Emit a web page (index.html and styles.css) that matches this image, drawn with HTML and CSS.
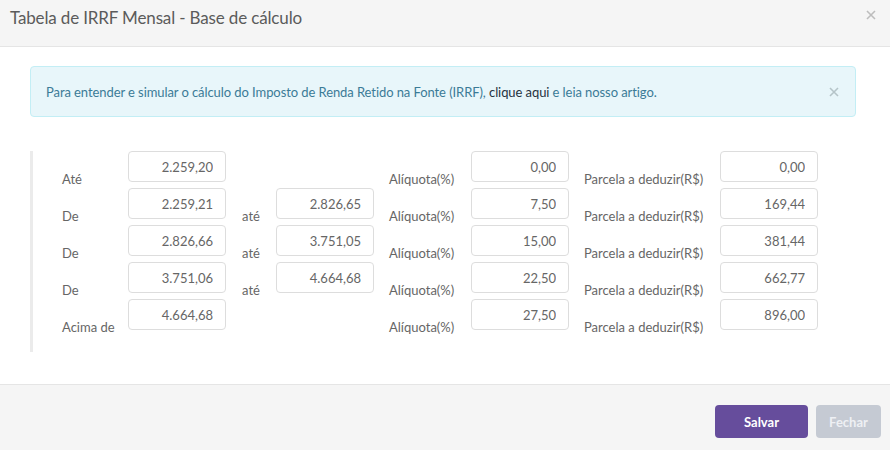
FILE: index.html
```html
<!DOCTYPE html>
<html lang="pt-BR">
<head>
<meta charset="utf-8">
<title>Tabela de IRRF Mensal</title>
<link rel="stylesheet" href="styles.css">
</head>
<body>
<div class="modal">
  <div class="modal-header">
    <h4 class="modal-title">Tabela de IRRF Mensal - Base de cálculo</h4>
    <button class="close close-header" aria-label="Fechar">
      <svg width="10" height="10" viewBox="0 0 10 10"><path d="M1 1L9 9M9 1L1 9" stroke="currentColor" stroke-width="1.6" fill="none"/></svg>
    </button>
  </div>
  <div class="modal-body">
    <div class="alert">
      <span>Para entender e simular o cálculo do Imposto de Renda Retido na Fonte (IRRF), <a href="#">clique aqui</a> e leia nosso artigo.</span>
      <button class="close close-alert" aria-label="Fechar">
        <svg width="10" height="10" viewBox="0 0 10 10"><path d="M1 1L9 9M9 1L1 9" stroke="currentColor" stroke-width="1.6" fill="none"/></svg>
      </button>
    </div>
    <div class="table-block">
      <div class="grid">
        <label class="lbl">Até</label>
        <input class="num" value="2.259,20">
        <span class="lbl lbl-ate"></span>
        <span class="empty"></span>
        <label class="lbl lbl-aliq">Alíquota(%)</label>
        <input class="num" value="0,00">
        <label class="lbl lbl-parc">Parcela a deduzir(R$)</label>
        <input class="num" value="0,00">

        <label class="lbl">De</label>
        <input class="num" value="2.259,21">
        <span class="lbl lbl-ate">até</span>
        <input class="num" value="2.826,65">
        <label class="lbl lbl-aliq">Alíquota(%)</label>
        <input class="num" value="7,50">
        <label class="lbl lbl-parc">Parcela a deduzir(R$)</label>
        <input class="num" value="169,44">

        <label class="lbl">De</label>
        <input class="num" value="2.826,66">
        <span class="lbl lbl-ate">até</span>
        <input class="num" value="3.751,05">
        <label class="lbl lbl-aliq">Alíquota(%)</label>
        <input class="num" value="15,00">
        <label class="lbl lbl-parc">Parcela a deduzir(R$)</label>
        <input class="num" value="381,44">

        <label class="lbl">De</label>
        <input class="num" value="3.751,06">
        <span class="lbl lbl-ate">até</span>
        <input class="num" value="4.664,68">
        <label class="lbl lbl-aliq">Alíquota(%)</label>
        <input class="num" value="22,50">
        <label class="lbl lbl-parc">Parcela a deduzir(R$)</label>
        <input class="num" value="662,77">

        <label class="lbl">Acima de</label>
        <input class="num" value="4.664,68">
        <span class="lbl lbl-ate"></span>
        <span class="empty"></span>
        <label class="lbl lbl-aliq">Alíquota(%)</label>
        <input class="num" value="27,50">
        <label class="lbl lbl-parc">Parcela a deduzir(R$)</label>
        <input class="num" value="896,00">
      </div>
    </div>
  </div>
  <div class="modal-footer">
    <button class="btn btn-primary">Salvar</button>
    <button class="btn btn-disabled">Fechar</button>
  </div>
</div>
</body>
</html>
```
FILE: styles.css
```css
* { box-sizing: border-box; }
html, body {
  margin: 0;
  padding: 0;
  background: #fff;
  font-family: Lato, "Open Sans", Arial, sans-serif;
  color: #666;
}
.modal {
  width: 890px;
  height: 450px;
  display: flex;
  flex-direction: column;
}
.modal-header {
  height: 47px;
  background: #f5f5f5;
  border-bottom: 1px solid #e5e5e5;
  display: flex;
  align-items: flex-start;
  justify-content: space-between;
  padding: 0 14px 0 10px;
}
.modal-title {
  margin: 0;
  font-weight: 400;
  font-size: 17px;
  letter-spacing: -0.15px;
  line-height: 24px;
  padding-top: 6px;
  color: #5b5b5b;
}
.close {
  background: none;
  border: 0;
  padding: 0;
  cursor: pointer;
  display: flex;
  color: #bdbdbd;
}
.close-header { margin-top: 10px; }
.modal-body {
  flex: 1;
  padding: 19px 34px 0 30px;
}
.alert {
  height: 51px;
  background: #e8f6fa;
  border: 1px solid #c3eef5;
  border-radius: 4px;
  display: flex;
  align-items: center;
  justify-content: space-between;
  padding: 0 16px 0 15px;
  font-size: 13px;
  letter-spacing: -0.08px;
  color: #3b7b97;
}
.alert a {
  color: #253340;
  text-decoration: none;
}
.close-alert { color: #b5c4c8; }
.table-block {
  margin-top: 34px;
  border-left: 3px solid #ebebeb;
  padding: 0 0 22px 29px;
}
.grid {
  display: grid;
  grid-template-columns: 66px 98px 50px 98px 97px 98px 151px 98px;
  grid-auto-rows: 31px;
  row-gap: 6px;
}
.lbl {
  font-size: 13px;
  line-height: 18px;
  padding-top: 19px;
  color: #666;
  white-space: nowrap;
}
.lbl-ate { padding-left: 16px; }
.lbl-aliq { padding-left: 15px; }
.lbl-parc { padding-left: 15px; }
.num {
  width: 98px;
  height: 31px;
  border: 1px solid #ddd;
  border-radius: 4px;
  text-align: right;
  padding: 0 12px;
  font-family: Lato, "Open Sans", Arial, sans-serif;
  font-size: 13px;
  color: #666;
  background: #fff;
  outline: none;
}
.modal-footer {
  height: 66px;
  background: #f5f5f5;
  border-top: 1px solid #e5e5e5;
  display: flex;
  justify-content: flex-end;
  align-items: flex-start;
  gap: 8px;
  padding: 20px 9px 0 0;
}
.btn {
  height: 33px;
  border: 0;
  border-radius: 4px;
  font-family: Lato, "Open Sans", Arial, sans-serif;
  font-size: 13px;
  font-weight: 700;
  color: #fff;
  cursor: pointer;
}
.btn-primary {
  width: 93px;
  background: #664d9c;
}
.btn-disabled {
  width: 65px;
  background: #c5cad3;
  color: #eef0f4;
}
```
